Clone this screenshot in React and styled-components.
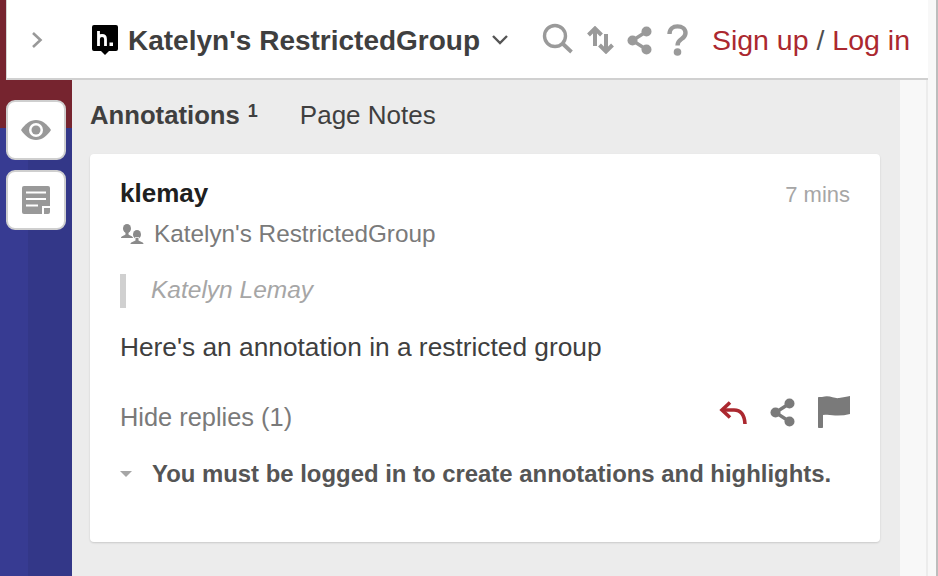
import React from 'react';
import styled, { createGlobalStyle } from 'styled-components';

const GlobalStyle = createGlobalStyle`
  html, body {
    margin: 0;
    padding: 0;
    height: 100%;
    overflow: hidden;
    font-family: "Liberation Sans", Arial, sans-serif;
  }
  #root {
    height: 100%;
  }
`;

const Page = styled.div`
  display: grid;
  grid-template-columns: 72px 828px 28px 10px;
  grid-template-rows: 80px 1fr;
  width: 938px;
  height: 576px;
  background: #f8f8f8;
`;

const Strip = styled.div`
  grid-column: 1;
  grid-row: 1 / 3;
  display: flex;
  flex-direction: column;
  background:
    linear-gradient(#76242f 0, #76242f 128px, transparent 128px),
    linear-gradient(90deg, #373b92 0, #373b92 28px, #333788 28px, #333788 72px);
`;

const StripButtons = styled.div`
  display: flex;
  flex-direction: column;
  gap: 10px;
  margin: 100px 0 0 6px;
`;

const StripButton = styled.div`
  width: 60px;
  height: 60px;
  box-sizing: border-box;
  display: flex;
  align-items: center;
  justify-content: center;
  background: #fff;
  border: 2px solid #cfcfcf;
  border-radius: 9px;
`;

const TopBar = styled.header`
  grid-column: 1 / 4;
  grid-row: 1;
  z-index: 1;
  margin-left: 6px;
  height: 80px;
  box-sizing: border-box;
  display: flex;
  align-items: center;
  padding: 2px 18px 0 24px;
  background: #fff;
  border-left: 1px solid #d4d4d4;
  border-bottom: 2px solid #d0d0d0;
`;

const GroupMenu = styled.div`
  display: flex;
  align-items: center;
  margin-left: 49px;
  flex: 1;
`;

const GroupName = styled.span`
  margin: 2px 11px 0 10px;
  font-size: 28px;
  font-weight: 700;
  color: #3f3f3f;
  white-space: nowrap;
`;

const BarIcons = styled.div`
  display: flex;
  align-items: center;
  gap: 13px;
  margin-right: 24px;

  svg:first-child {
    margin: -3px 1px 0 -1px;
  }

  svg:last-child {
    margin-left: 2px;
  }
`;

const AuthLinks = styled.div`
  font-size: 28.500px;
  color: #4f4f4f;
  white-space: nowrap;
`;

const AuthLink = styled.span`
  color: #ab282f;
`;

const Panel = styled.main`
  grid-column: 2;
  grid-row: 2;
  background: #ececec;
  padding: 0 20px 0 18px;
`;

const Tabs = styled.nav`
  display: flex;
  align-items: baseline;
  height: 74px;
  padding-top: 20px;
  box-sizing: border-box;
  color: #3f3f3f;
  font-size: 25.700px;
`;

const Tab = styled.span`
  font-weight: ${(p) => (p.$active ? 700 : 400)};
  font-size: ${(p) => (p.$active ? '25.700px' : '26px')};
  margin-right: ${(p) => (p.$active ? '8px' : '0')};
`;

const TabCount = styled.span`
  align-self: flex-start;
  margin: 2px 42px 0 0;
  font-size: 18px;
  font-weight: 700;
  line-height: 1;
`;

const Card = styled.article`
  box-sizing: border-box;
  height: 388px;
  padding: 24px 30px 0;
  background: #fff;
  border-radius: 4px;
  box-shadow: 0 1px 2px rgba(0, 0, 0, 0.15);
`;

const CardHeader = styled.div`
  display: flex;
  justify-content: space-between;
  align-items: baseline;
`;

const Author = styled.span`
  font-size: 26px;
  font-weight: 700;
  color: #202020;
`;

const Timestamp = styled.span`
  font-size: 22px;
  color: #a6a6a6;
`;

const GroupRow = styled.div`
  display: flex;
  align-items: center;
  gap: 10px;
  margin-top: 11px;
  font-size: 24.300px;
  color: #7a7a7a;
`;

const Quote = styled.blockquote`
  margin: 26px 0 0;
  height: 34px;
  display: flex;
  align-items: center;
  padding: 0 0 2px 25px;
  box-sizing: border-box;
  border-left: 6px solid #d0d0d0;
  font-size: 24.500px;
  font-style: italic;
  color: #a6a6a6;
`;

const Body = styled.p`
  margin: 24px 0 0;
  font-size: 26.300px;
  color: #3f3f3f;
`;

const CardFooter = styled.div`
  display: flex;
  justify-content: space-between;
  align-items: center;
  margin-top: 34px;
  height: 40px;
`;

const HideReplies = styled.span`
  font-size: 25.400px;
  color: #7a7a7a;
`;

const Actions = styled.div`
  display: flex;
  align-items: flex-start;
  align-self: flex-start;
  gap: 23px;
  margin-top: -1px;

  svg:first-child {
    margin-top: 5px;
  }

  svg:nth-child(2) {
    margin-top: 2px;
  }
`;

const LoginRow = styled.div`
  display: flex;
  align-items: center;
  gap: 20px;
  margin-top: 23px;
  font-size: 23.900px;
  font-weight: 700;
  color: #555;
`;

const Caret = styled.span`
  width: 0;
  height: 0;
  border-left: 6px solid transparent;
  border-right: 6px solid transparent;
  border-top: 6px solid #a6a6a6;
`;

const Gutter = styled.div`
  grid-column: 3;
  grid-row: 2;
  border-right: 2px solid #ececec;
`;

const Edge = styled.div`
  grid-column: 4;
  grid-row: 1 / 3;
  border-right: 2px solid #bdbdbd;
`;

const Chevron = () => (
  <svg width="12" height="18" viewBox="0 0 12 18" fill="none" stroke="#999" strokeWidth="2.600">
    <path d="M2 2l7.500 7L2 16" />
  </svg>
);

const Logo = () => (
  <svg width="26" height="30" viewBox="0 0 26 30">
    <path d="M2 0h22a2 2 0 0 1 2 2v22a2 2 0 0 1-2 2h-7l-4 4-4-4H2a2 2 0 0 1-2-2V2a2 2 0 0 1 2-2z" fill="#000" />
    <path d="M6.500 6v15M6.500 14c0-2.500 1.500-3.500 3.500-3.500s3.500 1 3.500 3.500v7" stroke="#fff" strokeWidth="2.800" fill="none" />
    <rect x="17.500" y="17.500" width="3.500" height="3.500" fill="#fff" />
  </svg>
);

const DownCaret = () => (
  <svg width="18" height="12" viewBox="0 0 18 12" fill="none" stroke="#555" strokeWidth="2.400">
    <path d="M2 2l7 7 7-7" />
  </svg>
);

const SearchIcon = () => (
  <svg width="31" height="31" viewBox="0 0 31 31" fill="none" stroke="#9a9a9a">
    <circle cx="13" cy="13" r="10.500" strokeWidth="3.400" />
    <path d="M20.500 20.500L29.500 29" strokeWidth="3.800" />
  </svg>
);

const SortIcon = () => (
  <svg width="27" height="28" viewBox="0 0 27 28" fill="none" stroke="#9a9a9a" strokeWidth="4">
    <path d="M8 20V3M1.500 9L8 2.500 14.500 9" />
    <path d="M19 8v17M12.500 19L19 25.500 25.500 19" />
  </svg>
);

const ShareIcon = ({ size = 25, color = '#9a9a9a' }) => (
  <svg width={size} height={size * 1.16} viewBox="0 0 25 29" fill={color} stroke={color}>
    <path d="M19.500 5.500L5.500 14.500l14 9" fill="none" strokeWidth="3.400" />
    <circle cx="19.500" cy="5.500" r="5" stroke="none" />
    <circle cx="5.500" cy="14.500" r="5" stroke="none" />
    <circle cx="19.500" cy="23.500" r="5" stroke="none" />
  </svg>
);

const HelpIcon = () => (
  <svg width="21" height="32" viewBox="0 0 21 32" fill="none" stroke="#9a9a9a" strokeWidth="4.400">
    <path d="M2.500 10C2.500 5 6 2.400 10.500 2.400S18.500 5 18.500 9c0 3-1.700 4.500-4 6-2.500 1.600-4 3-4 6.500" />
    <circle cx="10.500" cy="28" r="3.800" fill="#9a9a9a" stroke="none" />
  </svg>
);

const EyeIcon = () => (
  <svg width="30" height="20" viewBox="0 0 30 20">
    <path d="M0 10C4 4 9 0 15 0s11 4 15 10c-4 6-9 10-15 10S4 16 0 10z" fill="#999" />
    <circle cx="15" cy="10" r="7" fill="#fff" />
    <circle cx="15" cy="10" r="4.500" fill="#999" />
  </svg>
);

const NoteIcon = () => (
  <svg width="28" height="28" viewBox="0 0 28 28">
    <rect width="28" height="28" rx="2" fill="#999" />
    <path d="M4 6.500h20M4 13h20M4 19.500h12" stroke="#fff" strokeWidth="2.200" />
    <path d="M20 28v-8h8v2h-6v6z" fill="#fff" />
  </svg>
);

const GroupIcon = () => (
  <svg width="24" height="20" viewBox="0 0 24 20" fill="#8a8a8a">
    <ellipse cx="7" cy="4.500" rx="4" ry="4.500" />
    <path d="M1 14c0-2 3.500-2.500 4.500-3.500V8h3v2.500c1 1 4.500 1.500 4.500 3.500z" />
    <g stroke="#fff" strokeWidth="1.500" paintOrder="stroke">
      <ellipse cx="17" cy="10.500" rx="4" ry="4.500" />
      <path d="M10.500 20c0-2 3.500-2.500 5-3.500V14h3v2.500c1.500 1 5 1.500 5 3.500z" />
    </g>
  </svg>
);

const ReplyIcon = () => (
  <svg width="28" height="23" viewBox="0 0 28 23" fill="none" stroke="#ab282f" strokeWidth="3.600">
    <path d="M11 1.500L3 9l8 7.500" />
    <path d="M3.500 9H15c6.500 0 10.500 5 11 14" />
  </svg>
);

const FlagIcon = () => (
  <svg width="32" height="32" viewBox="0 0 32 32" fill="#7a7a7a">
    <path d="M0 2c0-.6.4-1 1-1h3c8-2.500 12 2 17 1 4-.6 8-1.500 11-2v18c-4 1-8 1.500-12 1.500-5.500 0-9-1.500-15-.5v11.500a2.500 2.500 0 0 1-5 0z" />
  </svg>
);

export default function App() {
  return (
    <>
      <GlobalStyle />
      <Page>
        <Strip>
          <StripButtons>
            <StripButton><EyeIcon /></StripButton>
            <StripButton><NoteIcon /></StripButton>
          </StripButtons>
        </Strip>
        <TopBar>
          <Chevron />
          <GroupMenu>
            <Logo />
            <GroupName>Katelyn's RestrictedGroup</GroupName>
            <DownCaret />
          </GroupMenu>
          <BarIcons>
            <SearchIcon />
            <SortIcon />
            <ShareIcon />
            <HelpIcon />
          </BarIcons>
          <AuthLinks>
            <AuthLink>Sign up</AuthLink> / <AuthLink>Log in</AuthLink>
          </AuthLinks>
        </TopBar>
        <Panel>
          <Tabs>
            <Tab $active>Annotations</Tab>
            <TabCount>1</TabCount>
            <Tab>Page Notes</Tab>
          </Tabs>
          <Card>
            <CardHeader>
              <Author>klemay</Author>
              <Timestamp>7 mins</Timestamp>
            </CardHeader>
            <GroupRow>
              <GroupIcon />
              Katelyn's RestrictedGroup
            </GroupRow>
            <Quote>Katelyn Lemay</Quote>
            <Body>Here's an annotation in a restricted group</Body>
            <CardFooter>
              <HideReplies>Hide replies (1)</HideReplies>
              <Actions>
                <ReplyIcon />
                <ShareIcon color="#7a7a7a" />
                <FlagIcon />
              </Actions>
            </CardFooter>
            <LoginRow>
              <Caret />
              You must be logged in to create annotations and highlights.
            </LoginRow>
          </Card>
        </Panel>
        <Gutter />
        <Edge />
      </Page>
    </>
  );
}
